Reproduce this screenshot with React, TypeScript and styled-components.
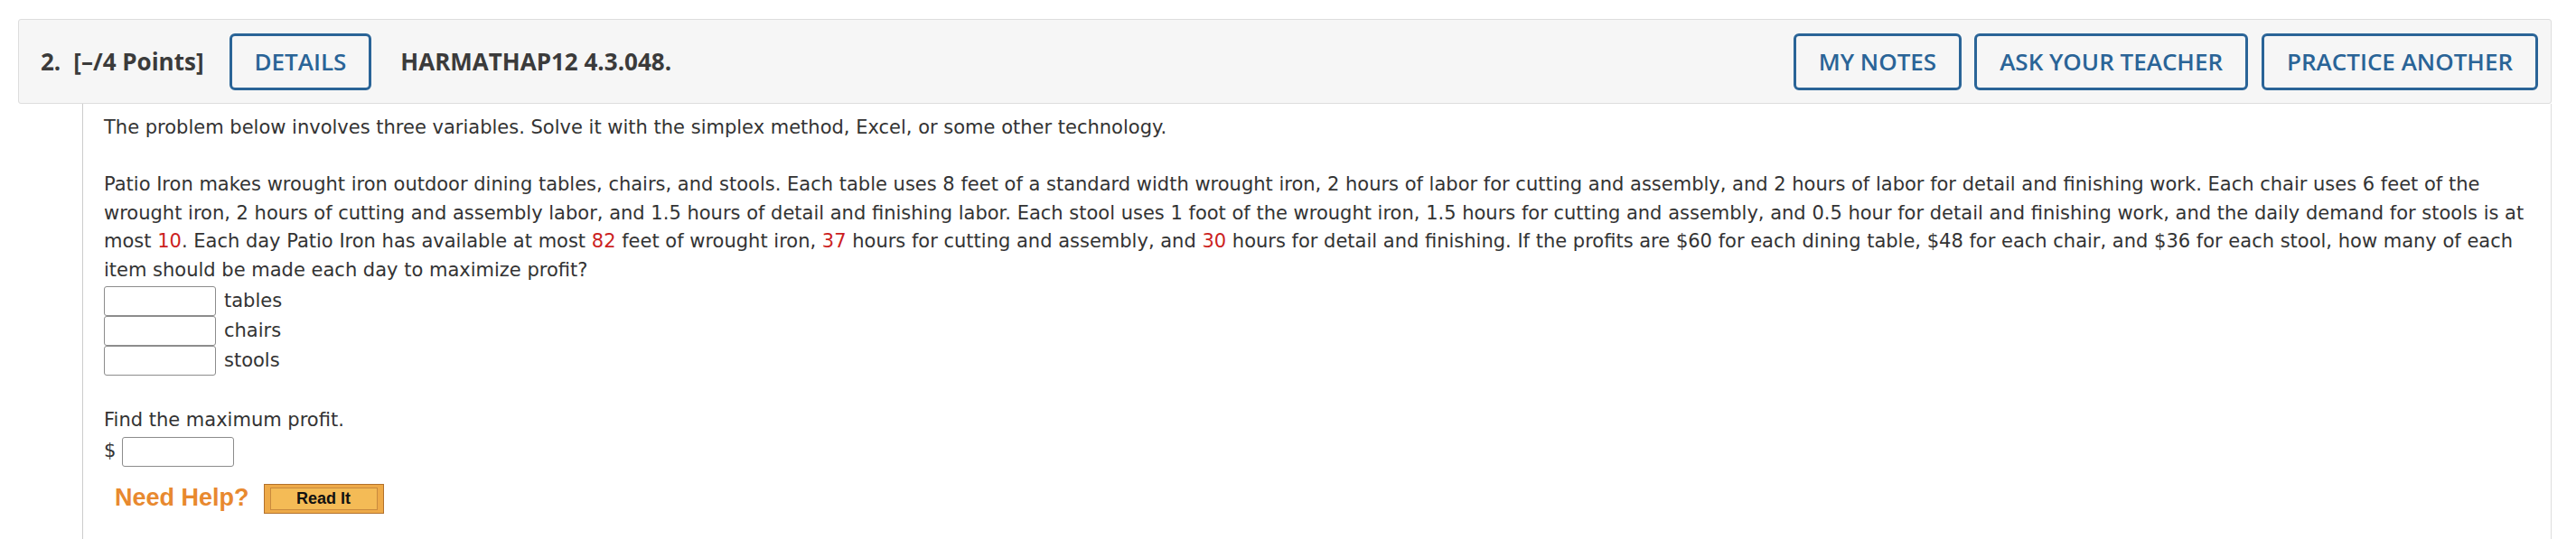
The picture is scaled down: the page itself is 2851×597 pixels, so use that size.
import React from 'react';
import styled, { createGlobalStyle } from 'styled-components';

const GlobalStyle = createGlobalStyle`
  html, body {
    margin: 0;
    padding: 0;
    background: #ffffff;
  }
`;

const Page = styled.div`
  padding: 21px 27px 0 20px;
`;

const Header = styled.div`
  display: flex;
  align-items: center;
  height: 94px;
  box-sizing: border-box;
  padding: 0 14px 0 24px;
  background: #f6f6f6;
  border: 1px solid #dddddd;
  border-radius: 3px;
  font-family: 'Open Sans', 'Liberation Sans', sans-serif;
`;

const HeaderTitle = styled.span<{ $gap?: number }>`
  font-size: 26px;
  font-weight: 700;
  color: #3b3b3b;
  margin-right: ${(p) => p.$gap ?? 0}px;
`;

const Spacer = styled.div`
  flex: 1;
`;

const OutlineButton = styled.button<{ $gap?: number; $after?: number }>`
  height: 63px;
  box-sizing: border-box;
  padding: 0 25px;
  margin-left: ${(p) => p.$gap ?? 0}px;
  margin-right: ${(p) => p.$after ?? 0}px;
  background: #f6f6f6;
  border: 3px solid #2a6497;
  border-radius: 6px;
  color: #2a6497;
  font-family: 'Open Sans', 'Liberation Sans', sans-serif;
  font-size: 26px;
  font-weight: 600;
  cursor: pointer;
`;

const Content = styled.div`
  margin-left: 71px;
  min-height: 482px;
  box-sizing: border-box;
  padding: 11px 24px 0 23px;
  border-left: 1px solid #cccccc;
  border-right: 1px solid #dddddd;
  font-family: Verdana, 'DejaVu Sans', sans-serif;
  font-size: 21px;
  line-height: 31.5px;
  color: #333333;
`;

const Para = styled.p<{ $after?: number }>`
  margin: 0 0 ${(p) => p.$after ?? 0}px 0;
`;

const Red = styled.span`
  color: #cc1f1f;
`;

const AnswerList = styled.div`
  display: flex;
  flex-direction: column;
  margin-top: 2px;
  margin-bottom: 34px;
`;

const AnswerRow = styled.label`
  display: flex;
  align-items: center;
  gap: 9px;
`;

const Box = styled.input`
  width: 124px;
  height: 33px;
  box-sizing: border-box;
  border: 1px solid #8c8c8c;
  border-radius: 3px;
  background: #ffffff;
  padding: 0 6px;
  font: inherit;
`;

const DollarRow = styled.label`
  display: flex;
  align-items: center;
  gap: 7px;
  margin-top: 2px;
`;

const HelpRow = styled.div`
  display: flex;
  align-items: center;
  gap: 16px;
  margin: 19px 0 0 12px;
`;

const NeedHelp = styled.span`
  font-family: 'Liberation Sans', Arial, sans-serif;
  font-size: 27px;
  font-weight: 700;
  color: #e8892f;
`;

const ReadIt = styled.button`
  width: 133px;
  height: 33px;
  padding: 3px 6px;
  box-sizing: border-box;
  background: #eeaa48;
  border: 1px solid #b3712c;
  cursor: pointer;
`;

const ReadItInner = styled.span`
  display: flex;
  align-items: center;
  justify-content: center;
  height: 100%;
  box-sizing: border-box;
  border: 1px solid #c98a3e;
  background: #f4bb56;
  font-family: 'Liberation Sans', Arial, sans-serif;
  font-size: 18px;
  font-weight: 700;
  color: #111111;
`;

const answers = ['tables', 'chairs', 'stools'];

export default function App() {
  return (
    <Page>
      <GlobalStyle />
      <Header>
        <HeaderTitle $gap={14}>2.</HeaderTitle>
        <HeaderTitle $gap={28}>[–/4 Points]</HeaderTitle>
        <OutlineButton $after={32}>DETAILS</OutlineButton>
        <HeaderTitle>HARMATHAP12 4.3.048.</HeaderTitle>
        <Spacer />
        <OutlineButton>MY NOTES</OutlineButton>
        <OutlineButton $gap={14}>ASK YOUR TEACHER</OutlineButton>
        <OutlineButton $gap={15}>PRACTICE ANOTHER</OutlineButton>
      </Header>
      <Content>
        <Para $after={31.5}>
          The problem below involves three variables. Solve it with the simplex method, Excel, or some other technology.
        </Para>
        <Para>
          Patio Iron makes wrought iron outdoor dining tables, chairs, and stools. Each table uses 8 feet of a standard
          width wrought iron, 2 hours of labor for cutting and assembly, and 2 hours of labor for detail and finishing
          work. Each chair uses 6 feet of the wrought iron, 2 hours of cutting and assembly labor, and 1.5 hours of
          detail and finishing labor. Each stool uses 1 foot of the wrought iron, 1.5 hours for cutting and assembly,
          and 0.5 hour for detail and finishing work, and the daily demand for stools is at most <Red>10</Red>. Each day
          Patio Iron has available at most <Red>82</Red> feet of wrought iron, <Red>37</Red> hours for cutting and
          assembly, and <Red>30</Red> hours for detail and finishing. If the profits are $60 for each dining table, $48
          for each chair, and $36 for each stool, how many of each item should be made each day to maximize profit?
        </Para>
        <AnswerList>
          {answers.map((a) => (
            <AnswerRow key={a}>
              <Box type="text" />
              {a}
            </AnswerRow>
          ))}
        </AnswerList>
        <Para>Find the maximum profit.</Para>
        <DollarRow>
          $
          <Box type="text" />
        </DollarRow>
        <HelpRow>
          <NeedHelp>Need Help?</NeedHelp>
          <ReadIt>
            <ReadItInner>Read It</ReadItInner>
          </ReadIt>
        </HelpRow>
      </Content>
    </Page>
  );
}
